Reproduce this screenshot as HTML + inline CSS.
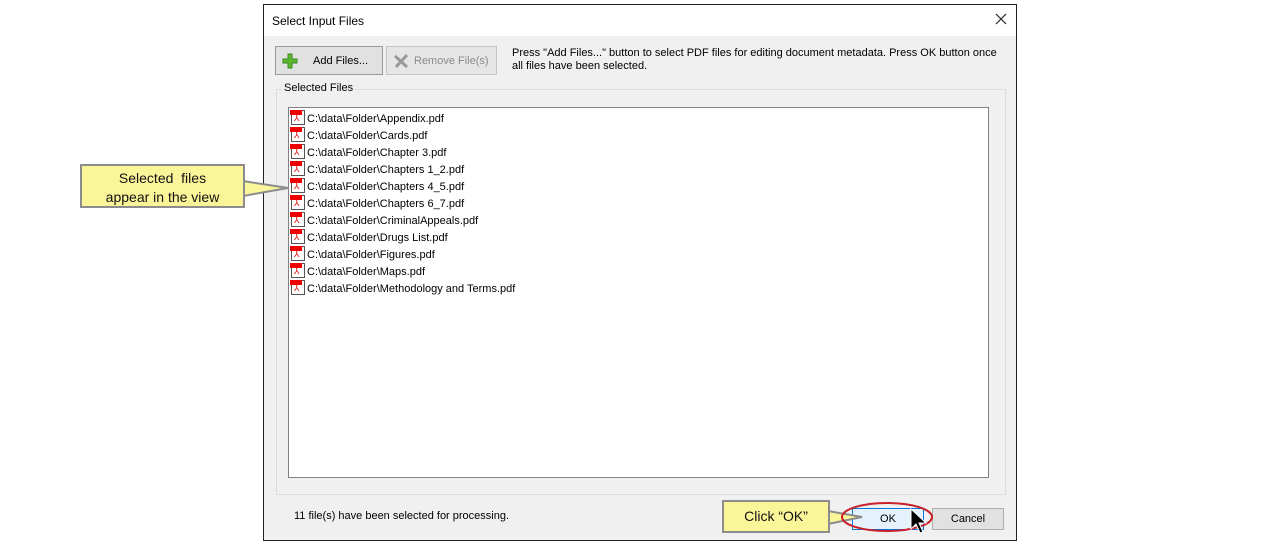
<!DOCTYPE html>
<html><head><meta charset="utf-8"><style>
*{margin:0;padding:0;box-sizing:border-box}
body{width:1280px;height:545px;background:#fff;position:relative;font-family:"Liberation Sans",sans-serif;font-size:11px;color:#000;overflow:hidden}
.abs{position:absolute}
#dlg{left:263px;top:4px;width:754px;height:537px;border:1px solid #222;background:#f0f0f0}
#title{left:0;top:0;width:752px;height:31px;background:#fff}
.btn{position:absolute;border:1px solid #adadad;background:#e1e1e1;text-align:center}
.row{position:absolute;left:2px;height:17px;line-height:17px;white-space:nowrap;font-size:11px}
.ic{display:inline-block;width:14px;height:15px;vertical-align:-3px;margin-right:2px;position:relative;background:#fff;border:1px solid #555}
.ic:before{content:"";position:absolute;left:-2px;top:-1px;width:12px;height:5px;background:#e00}
.ic:after{content:"⅄";position:absolute;left:2px;top:2px;font-size:9px;line-height:10px;color:#d00}
.call{position:absolute;background:#fbf59a;border:2px solid #8c8c8c;text-align:center;font-size:14px;color:#111}
</style></head><body>
<div id="dlg" class="abs">
 <div id="title" class="abs"><span class="abs" style="left:8px;top:9px;font-size:12px">Select Input Files</span>
  <svg class="abs" style="left:731px;top:8px" width="12" height="12"><path d="M1 1L11 11M11 1L1 11" stroke="#222" stroke-width="1.2"/></svg></div>
 <div class="btn" style="left:11px;top:41px;width:108px;height:29px;border-color:#999">
  <svg class="abs" style="left:6px;top:6px" width="16" height="16"><path d="M6 1h4v5h5v4h-5v5H6v-5H1V6h5z" fill="#5cb82e" stroke="#3a8a1e"/></svg>
  <span class="abs" style="left:37px;top:8px">Add Files...</span></div>
 <div class="btn" style="left:122px;top:41px;width:111px;height:29px;color:#8a8a8a;border-color:#c4c4c4;background:#e6e6e6">
  <svg class="abs" style="left:6px;top:6px" width="16" height="16"><path d="M2 3L14 14M14 2L3 14" stroke="#999" stroke-width="3"/></svg>
  <span class="abs" style="left:27px;top:8px">Remove File(s)</span></div>
 <div class="abs" style="left:248px;top:42px;width:495px;line-height:13px;font-size:11px">Press "Add Files..." button to select PDF files for editing document metadata. Press OK button once all files have been selected.</div>
 <div class="abs" style="left:12px;top:84px;width:730px;height:406px;border:1px solid #dcdcdc"></div>
 <div class="abs" style="left:18px;top:77px;background:#f0f0f0;padding:0 2px">Selected Files</div>
 <div class="abs" style="left:24px;top:102px;width:701px;height:371px;background:#fff;border:1px solid #828282">
  <div class="row" style="top:2px"><span class="ic"></span>C:\data\Folder\Appendix.pdf</div>
  <div class="row" style="top:19px"><span class="ic"></span>C:\data\Folder\Cards.pdf</div>
  <div class="row" style="top:36px"><span class="ic"></span>C:\data\Folder\Chapter 3.pdf</div>
  <div class="row" style="top:53px"><span class="ic"></span>C:\data\Folder\Chapters 1_2.pdf</div>
  <div class="row" style="top:70px"><span class="ic"></span>C:\data\Folder\Chapters 4_5.pdf</div>
  <div class="row" style="top:87px"><span class="ic"></span>C:\data\Folder\Chapters 6_7.pdf</div>
  <div class="row" style="top:104px"><span class="ic"></span>C:\data\Folder\CriminalAppeals.pdf</div>
  <div class="row" style="top:121px"><span class="ic"></span>C:\data\Folder\Drugs List.pdf</div>
  <div class="row" style="top:138px"><span class="ic"></span>C:\data\Folder\Figures.pdf</div>
  <div class="row" style="top:155px"><span class="ic"></span>C:\data\Folder\Maps.pdf</div>
  <div class="row" style="top:172px"><span class="ic"></span>C:\data\Folder\Methodology and Terms.pdf</div>
 </div>
 <div class="abs" style="left:30px;top:505px">11 file(s) have been selected for processing.</div>
 <div class="btn" style="left:588px;top:503px;width:72px;height:22px;line-height:20px;background:#e5f1fb;border-color:#0078d7">OK</div>
 <div class="btn" style="left:668px;top:503px;width:72px;height:22px;line-height:20px">Cancel</div>
</div>
<svg class="abs" style="left:0;top:0" width="1280" height="545">
 <polygon points="243,181 288,188 243,196" fill="#fbf59a" stroke="#8c8c8c" stroke-width="2"/>
 <polygon points="828,511 862,517 828,524" fill="#fbf59a" stroke="#8c8c8c" stroke-width="2"/>
 <ellipse cx="887" cy="517" rx="45" ry="14" fill="none" stroke="#c8202a" stroke-width="2"/>
 <path d="M911 509v20l5-5 4 9 3-1-4-9h7z" fill="#000" stroke="#fff" stroke-width="1"/>
</svg>
<div class="call" style="left:80px;top:164px;width:165px;height:44px;line-height:19px;padding-top:3px">Selected&nbsp; files<br>appear in the view</div>
<div class="call" style="left:722px;top:500px;width:108px;height:33px;line-height:29px">Click “OK”</div>
</body></html>
